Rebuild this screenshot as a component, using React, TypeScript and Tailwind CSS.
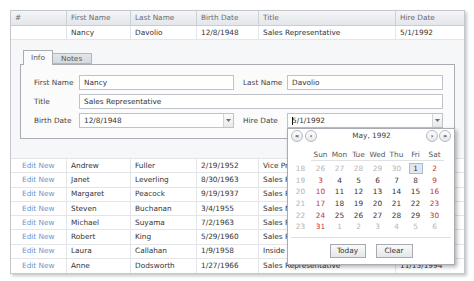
import React from "react";

const rows = [
  ["Andrew", "Fuller", "2/19/1952", "Vice President, Sales", "8/14/1992"],
  ["Janet", "Leverling", "8/30/1963", "Sales Representative", "4/1/1992"],
  ["Margaret", "Peacock", "9/19/1937", "Sales Representative", "5/3/1993"],
  ["Steven", "Buchanan", "3/4/1955", "Sales Manager", "10/17/1993"],
  ["Michael", "Suyama", "7/2/1963", "Sales Representative", "10/17/1993"],
  ["Robert", "King", "5/29/1960", "Sales Representative", "1/2/1994"],
  ["Laura", "Callahan", "1/9/1958", "Inside Sales Coordinator", "3/5/1994"],
  ["Anne", "Dodsworth", "1/27/1966", "Sales Representative", "11/15/1994"],
];

const COLS = "grid grid-cols-[56px_64px_66px_62px_137px_1fr]";

function HeadCell({ children, last }: { children?: React.ReactNode; last?: boolean }) {
  return (
    <div
      className={`flex items-center pl-[4px] overflow-hidden whitespace-nowrap ${
        last ? "" : "border-r border-[#cdd1d6]"
      }`}
    >
      {children}
    </div>
  );
}

function Cell({
  children,
  last,
  className = "",
}: {
  children?: React.ReactNode;
  last?: boolean;
  className?: string;
}) {
  return (
    <div
      className={`flex items-center overflow-hidden whitespace-nowrap ${
        last ? "" : "border-r border-[#e3e5e8]"
      } ${className}`}
    >
      {children}
    </div>
  );
}

function DropBtn() {
  return (
    <div className="absolute right-0 top-0 bottom-0 w-[10px] border-l border-[#d2d4d8] bg-linear-to-b from-[#fbfbfb] to-[#e8e9eb] flex items-center justify-center">
      <svg width="5" height="3" viewBox="0 0 5 3">
        <path d="M0 0 L5 0 L2.5 3 Z" fill="#6f6f6f" />
      </svg>
    </div>
  );
}

function Input({
  children,
  className = "",
  drop,
  extra,
}: {
  children?: React.ReactNode;
  className?: string;
  drop?: boolean;
  extra?: React.ReactNode;
}) {
  return (
    <div
      className={`relative h-[15px] border border-[#bfc3c9] bg-white pl-[4px] flex items-center text-[#333] ${className}`}
    >
      {children}
      {drop && <DropBtn />}
      {extra}
    </div>
  );
}

function NavBtn({ children }: { children: React.ReactNode }) {
  return (
    <div className="w-[12px] h-[12px] rounded-full border border-[#b4b8be] bg-linear-to-b from-[#ffffff] to-[#e6e8eb] flex items-center justify-center text-[6.5px] leading-none text-[#555] font-bold">
      {children}
    </div>
  );
}

const weeks: [number, number[]][] = [
  [18, [26, 27, 28, 29, 30, 1, 2]],
  [19, [3, 4, 5, 6, 7, 8, 9]],
  [20, [10, 11, 12, 13, 14, 15, 16]],
  [21, [17, 18, 19, 20, 21, 22, 23]],
  [22, [24, 25, 26, 27, 28, 29, 30]],
  [23, [31, 1, 2, 3, 4, 5, 6]],
];

function Calendar() {
  return (
    <div className="absolute left-[-1px] top-[14px] w-[168px] h-[137px] z-20 bg-white border border-[#a9adb3] shadow-[2px_2px_4px_rgba(0,0,0,0.3)] flex flex-col">
      <div className="flex items-center px-[3px] pt-[1px] h-[13px]">
        <div className="flex gap-[2px]">
          <NavBtn>«</NavBtn>
          <NavBtn>‹</NavBtn>
        </div>
        <div className="flex-1 text-center text-[#444]">May, 1992</div>
        <div className="flex gap-[1px]">
          <NavBtn>›</NavBtn>
          <NavBtn>»</NavBtn>
        </div>
      </div>
      <div className="flex pl-[2px] mt-[7px]">
        <div className="w-[21px]" />
        <div className="grid grid-cols-[repeat(7,19px)] h-[12px] border-b border-[#dfe1e4] text-[#555]">
          {["Sun", "Mon", "Tue", "Wed", "Thu", "Fri", "Sat"].map((d) => (
            <div key={d} className="flex items-center justify-center">
              {d}
            </div>
          ))}
        </div>
      </div>
      <div className="flex flex-col pl-[2px] mt-[2px]">
        {weeks.map(([wk, days], wi) => (
          <div key={wk} className="flex h-[11.6px]">
            <div className="w-[21px] flex items-center justify-center text-[#b2b2b2]">{wk}</div>
            <div className="grid grid-cols-[repeat(7,19px)]">
              {days.map((d, i) => {
                const other = (wi === 0 && d > 7) || (wi === 5 && i > 0);
                const weekend = i === 0 || i === 6;
                const sel = wi === 0 && i === 5;
                const color = other ? "text-[#b5b5b5]" : weekend ? "text-[#c5303b]" : "text-[#333]";
                return (
                  <div key={i} className="flex items-center justify-center">
                    {sel ? (
                      <span className="w-[14px] h-[11px] flex items-center justify-center bg-[#dfe8f2] border border-[#a9bdd4] text-[#333]">
                        {d}
                      </span>
                    ) : (
                      <span className={color}>{d}</span>
                    )}
                  </div>
                );
              })}
            </div>
          </div>
        ))}
      </div>
      <div className="mx-[3px] mt-[4px] border-t border-[#dcdfe3] flex justify-center gap-[10px] pt-[6px]">
        <div className="w-[36px] h-[14px] border border-[#a7abb1] bg-linear-to-b from-[#fafafa] to-[#e5e7ea] flex items-center justify-center text-[#333]">
          Today
        </div>
        <div className="w-[37px] h-[14px] border border-[#a7abb1] bg-linear-to-b from-[#fafafa] to-[#e5e7ea] flex items-center justify-center text-[#333]">
          Clear
        </div>
      </div>
    </div>
  );
}

export default function App() {
  return (
    <div className="w-[474px] h-[281px] bg-white font-['DejaVu_Sans',sans-serif] text-[7.35px] leading-none text-[#333] pt-[10px] pl-[10px]">
      <div className="w-[455px] border border-[#c4c8cd] bg-white shadow-[2px_2px_3px_rgba(0,0,0,0.22)]">
        {/* Header */}
        <div className={`${COLS} h-[15px] bg-linear-to-b from-[#f4f5f7] to-[#e3e6ea] border-b border-[#c9cdd2] text-[#6a6a6a]`}>
          <HeadCell>#</HeadCell>
          <HeadCell>First Name</HeadCell>
          <HeadCell>Last Name</HeadCell>
          <HeadCell>Birth Date</HeadCell>
          <HeadCell>Title</HeadCell>
          <HeadCell last>Hire Date</HeadCell>
        </div>
        {/* Nancy row */}
        <div className={`${COLS} h-[14px] border-b border-[#e3e5e8]`}>
          <Cell />
          <Cell className="pl-[4px]">Nancy</Cell>
          <Cell className="pl-[4px]">Davolio</Cell>
          <Cell className="pl-[4px]">12/8/1948</Cell>
          <Cell className="pl-[4px]">Sales Representative</Cell>
          <Cell last className="pl-[4px]">5/1/1992</Cell>
        </div>
        {/* Detail */}
        <div className="bg-[#f6f7f8] px-[9px] pt-[10px] pb-[19px] border-b border-[#e3e5e8]">
          <div className="flex items-end h-[14px] pl-[3px]">
            <div className="relative top-[1px] z-10 h-[15px] w-[30px] border border-b-0 border-[#a9adb3] bg-[#fbfbfb] flex items-center pl-[7px] text-[#555]">
              Info
            </div>
            <div className="h-[11px] w-[39px] border border-l-0 border-[#b3b7bd] bg-linear-to-b from-[#e3e5e8] to-[#d6d9dd] flex items-center pl-[8px] text-[#555]">
              Notes
            </div>
          </div>
          <div className="border border-[#a9adb3] bg-[#fbfbfb] pl-[13px] pr-[11px] py-[10px]">
            <div className="grid grid-cols-[45px_155px_9px_44px_156px] gap-y-[4px] items-center text-[#444]">
              <div>First Name</div>
              <Input>Nancy</Input>
              <div />
              <div>Last Name</div>
              <Input>Davolio</Input>

              <div>Title</div>
              <Input className="col-span-4">Sales Representative</Input>

              <div>Birth Date</div>
              <Input drop>12/8/1948</Input>
              <div />
              <div>Hire Date</div>
              <Input
                drop
                extra={
                  <>
                    <span className="absolute left-[4px] top-[3px] w-px h-[8px] bg-[#111]" />
                    <Calendar />
                  </>
                }
              >
                5/1/1992
              </Input>
            </div>
          </div>
        </div>
        {/* Remaining rows */}
        {rows.map((r, i) => (
          <div
            key={r[0]}
            className={`${COLS} h-[14.25px] ${i < rows.length - 1 ? "border-b border-[#e3e5e8]" : ""}`}
          >
            <Cell className="pl-[11px] text-[#6d94c9]">Edit New</Cell>
            <Cell className="pl-[4px]">{r[0]}</Cell>
            <Cell className="pl-[4px]">{r[1]}</Cell>
            <Cell className="pl-[4px]">{r[2]}</Cell>
            <Cell className="pl-[4px]">{r[3]}</Cell>
            <Cell last className="pl-[4px]">{r[4]}</Cell>
          </div>
        ))}
      </div>
    </div>
  );
}
